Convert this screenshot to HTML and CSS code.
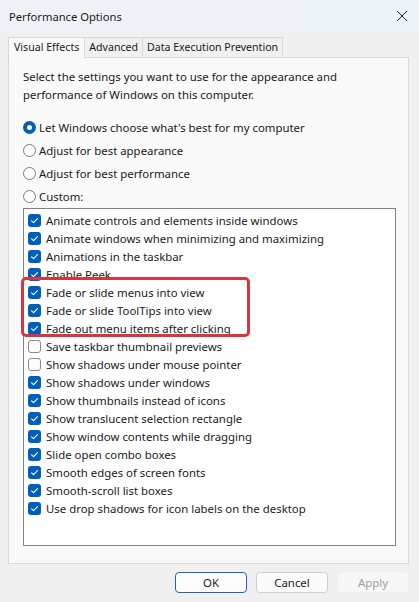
FILE: index.html
```html
<!DOCTYPE html>
<html>
<head>
<meta charset="utf-8">
<link rel="stylesheet" href="styles.css">
</head>
<body>
<div class="window">
  <div class="titlebar">
    <span class="title">Performance Options</span>
    <svg class="close" width="12" height="12" viewBox="0 0 12 12"><path d="M1 1L11 11M11 1L1 11" stroke="#222" stroke-width="1" fill="none"/></svg>
  </div>
  <div class="tabs">
    <div class="tab active">Visual Effects</div>
    <div class="tab">Advanced</div>
    <div class="tab">Data Execution Prevention</div>
  </div>
  <div class="panel">
    <p class="desc">Select the settings you want to use for the appearance and performance of Windows on this computer.</p>
    <div class="radios">
      <div class="radio-row"><span class="radio on"></span>Let Windows choose what's best for my computer</div>
      <div class="radio-row"><span class="radio"></span>Adjust for best appearance</div>
      <div class="radio-row"><span class="radio"></span>Adjust for best performance</div>
      <div class="radio-row"><span class="radio"></span>Custom:</div>
    </div>
    <div class="listbox">
      <div class="row"><span class="cb on"></span>Animate controls and elements inside windows</div>
      <div class="row"><span class="cb on"></span>Animate windows when minimizing and maximizing</div>
      <div class="row"><span class="cb on"></span>Animations in the taskbar</div>
      <div class="row"><span class="cb on"></span>Enable Peek</div>
      <div class="row"><span class="cb on"></span>Fade or slide menus into view</div>
      <div class="row"><span class="cb on"></span>Fade or slide ToolTips into view</div>
      <div class="row"><span class="cb on"></span>Fade out menu items after clicking</div>
      <div class="row"><span class="cb"></span>Save taskbar thumbnail previews</div>
      <div class="row"><span class="cb"></span>Show shadows under mouse pointer</div>
      <div class="row"><span class="cb on"></span>Show shadows under windows</div>
      <div class="row"><span class="cb on"></span>Show thumbnails instead of icons</div>
      <div class="row"><span class="cb on"></span>Show translucent selection rectangle</div>
      <div class="row"><span class="cb on"></span>Show window contents while dragging</div>
      <div class="row"><span class="cb on"></span>Slide open combo boxes</div>
      <div class="row"><span class="cb on"></span>Smooth edges of screen fonts</div>
      <div class="row"><span class="cb on"></span>Smooth-scroll list boxes</div>
      <div class="row"><span class="cb on"></span>Use drop shadows for icon labels on the desktop</div>
      <div class="highlight"></div>
    </div>
  </div>
  <div class="buttons">
    <button class="btn default">OK</button>
    <button class="btn">Cancel</button>
    <button class="btn disabled">Apply</button>
  </div>
</div>
</body>
</html>
```
FILE: styles.css
```css
* { box-sizing: border-box; }
html, body { margin: 0; padding: 0; }
body {
  width: 419px;
  height: 602px;
  background: #f0f0f0;
  font-family: "Noto Sans", "Open Sans", sans-serif;
  font-size: 11.4px;
  color: #1a1a1a;
  overflow: hidden;
}
.window {
  display: flex;
  flex-direction: column;
  height: 602px;
}
.titlebar {
  height: 32px;
  display: flex;
  align-items: center;
  justify-content: space-between;
  padding: 0 11px 0 9px;
  background: linear-gradient(90deg, #eef1f5, #eef3f9);
}
.title { font-size: 11.2px; color: #1b1b1b; }
.close { display: block; }
.tabs {
  display: flex;
  align-items: flex-end;
  padding: 0 8px;
  margin-top: 4px;
  height: 21px;
  position: relative;
  z-index: 1;
  font-size: 10.6px;
}
.tab {
  height: 19px;
  padding: 0 4px;
  border: 1px solid #d9d9d9;
  border-bottom: none;
  border-left: none;
  background: #f0f0f0;
  line-height: 18px;
  margin-bottom: 1px;
}
.tab.active {
  height: 21px;
  border-left: 1px solid #d9d9d9;
  background: #f9f9f9;
  padding: 0 5px;
  line-height: 19px;
  margin-bottom: -1px;
}
.panel {
  margin: 0 10px 0 8px;
  height: 507px;
  border: 1px solid #dadada;
  background: #f9f9f9;
  padding: 10px 12px 0 14px;
}
.desc {
  margin: 0;
  line-height: 18px;
  width: 330px;
}
.radios {
  margin-top: 12px;
}
.radio-row {
  height: 23px;
  display: flex;
  align-items: center;
}
.radio {
  width: 13px;
  height: 13px;
  border-radius: 50%;
  border: 1px solid #7a7a7a;
  background: #fdfdfd;
  margin-right: 3px;
  flex: none;
}
.radio.on {
  border: 4px solid #005fb8;
  background: #fff;
}
.listbox {
  position: relative;
  margin-top: 0;
  height: 338px;
  border: 1px solid #828282;
  background: #fff;
  padding: 2px 0 0 4px;
}
.row {
  height: 18px;
  display: flex;
  align-items: center;
  white-space: nowrap;
}
.cb {
  width: 13px;
  height: 13px;
  border-radius: 3px;
  border: 1px solid #8a8a8a;
  background: #fdfdfd;
  margin-right: 5px;
  flex: none;
}
.cb.on {
  border: none;
  background: #005fb8 url("data:image/svg+xml;utf8,<svg xmlns='http://www.w3.org/2000/svg' width='13' height='13' viewBox='0 0 13 13'><path d='M3.6 6.8L5.6 8.7L9.5 4.6' stroke='white' stroke-width='1.1' fill='none' stroke-linecap='round' stroke-linejoin='round'/></svg>") no-repeat center;
}
.highlight {
  position: absolute;
  left: -3px;
  top: 68px;
  width: 229px;
  height: 60px;
  border: 3px solid #d9353c;
  border-radius: 5px;
  pointer-events: none;
}
.buttons {
  display: flex;
  justify-content: flex-end;
  gap: 9px;
  padding: 8px 10px 0 0;
}
.btn {
  width: 72px;
  height: 21px;
  font-family: inherit;
  font-size: 11.4px;
  color: #1a1a1a;
  background: #fbfbfb;
  border: 1px solid #cfcfcf;
  border-radius: 4px;
  padding: 0;
  line-height: 19px;
}
.btn.default {
  border-color: #1469b8;
  background: #fdfdfd;
}
.btn.disabled {
  color: #9d9d9d;
  border-color: #f2f2f2;
  background: #f7f7f7;
}
```
